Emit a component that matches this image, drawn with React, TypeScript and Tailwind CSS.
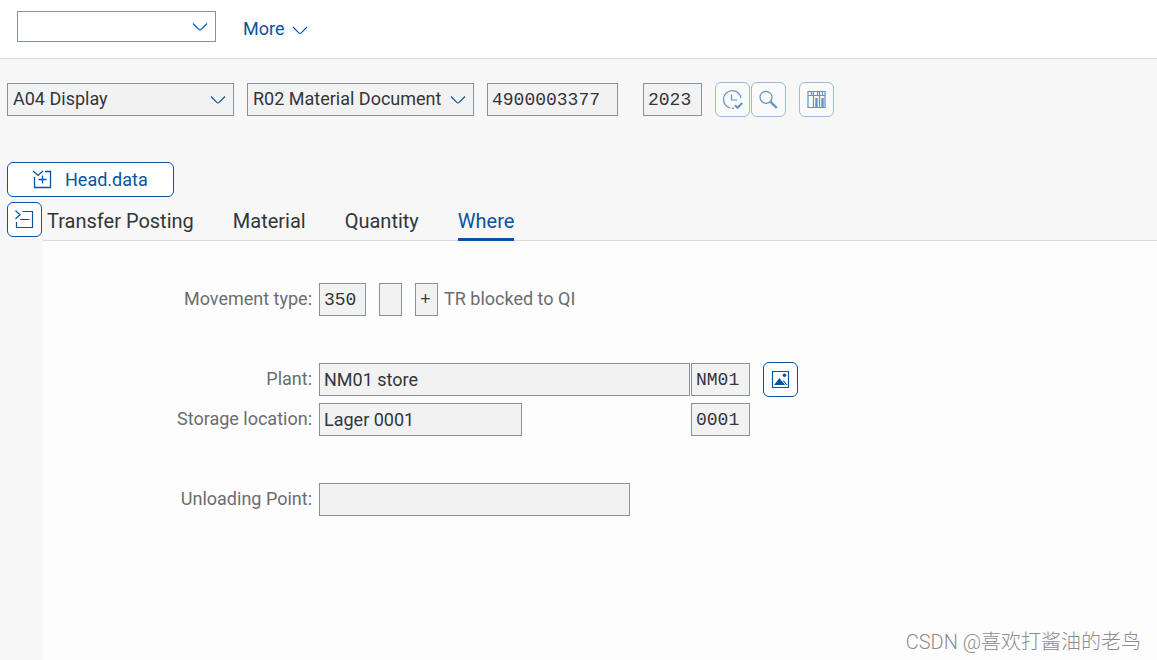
import { useState } from 'react';
import type { ReactNode } from 'react';
import clsx from 'clsx';

const TABS = ['Transfer Posting', 'Material', 'Quantity', 'Where'];

function Chevron({ className }: { className?: string }) {
  return (
    <svg
      className={className}
      width="16"
      height="9"
      viewBox="0 0 16 9"
      fill="none"
      stroke="currentColor"
      strokeWidth="1.2"
      aria-hidden="true"
    >
      <path d="M1 1 6.8 6.9Q8 8 9.2 6.9L15 1" />
    </svg>
  );
}

interface SelectFieldProps {
  label: string;
  options: string[];
  className: string;
}

function SelectField({ label, options, className }: SelectFieldProps) {
  return (
    <div className="relative">
      <select
        aria-label={label}
        className={clsx(
          'block appearance-none border border-[#89919a] pr-8 pb-px pl-[5px] text-lg leading-5 outline-none',
          className
        )}
      >
        {options.map((option) => (
          <option key={option}>{option}</option>
        ))}
      </select>
      <Chevron className="pointer-events-none absolute top-1/2 right-2 -translate-y-1/2 text-[#0854a0]" />
    </div>
  );
}

interface TextFieldProps {
  id?: string;
  label?: string;
  value: string;
  mono?: boolean;
  className: string;
}

function TextField({ id, label, value, mono, className }: TextFieldProps) {
  return (
    <input
      id={id}
      aria-label={label}
      type="text"
      readOnly
      defaultValue={value}
      className={clsx(
        'h-[33px] border border-[#89919a] bg-[#f2f2f2] px-1 text-lg text-[#32363a] outline-none',
        mono && "pt-px font-['Liberation_Mono',monospace]",
        className
      )}
    />
  );
}

interface IconButtonProps {
  label: string;
  disabled?: boolean;
  children: ReactNode;
}

function IconButton({ label, disabled, children }: IconButtonProps) {
  return (
    <button
      type="button"
      aria-label={label}
      disabled={disabled}
      className={clsx(
        'flex size-[35px] shrink-0 items-center justify-center rounded-md border',
        disabled
          ? 'border-[#9cbbd9] bg-[#fafafa] text-[#6394c5]'
          : 'border-[#0854a0] bg-white text-[#0854a0]'
      )}
    >
      <svg
        width="21"
        height="21"
        viewBox="0 0 21 21"
        fill="none"
        stroke="currentColor"
        strokeWidth="1.2"
        aria-hidden="true"
      >
        {children}
      </svg>
    </button>
  );
}

function FormRow({ label, htmlFor, children }: { label: string; htmlFor: string; children: ReactNode }) {
  return (
    <div className="flex h-10 items-center">
      <label htmlFor={htmlFor} className="mr-[7px] w-[269px] text-right text-lg text-[#6a6d70]">
        {label}
      </label>
      {children}
    </div>
  );
}

export default function App() {
  const [activeTab, setActiveTab] = useState('Where');

  return (
    <div className="relative flex min-h-screen flex-col bg-[#f7f7f7] font-['Roboto','Noto_Sans_CJK_SC',sans-serif] text-[#32363a]">
      <header className="flex items-start border-b border-[#d9d9d9] bg-white py-[11px] pl-[17px]">
        <SelectField label="Command" options={['']} className="h-[31px] w-[199px] bg-white" />
        <button type="button" className="ml-[27px] flex h-9 items-center gap-2 text-lg text-[#0854a0]">
          More
          <Chevron className="mt-0.5" />
        </button>
      </header>

      {/* Document selection */}
      <div className="flex items-center pt-[23px] pl-[7px]">
        <div className="flex gap-[13px]">
          <SelectField label="Action" options={['A04 Display']} className="h-[33px] w-[227px] bg-[#f2f2f2]" />
          <SelectField
            label="Reference document"
            options={['R02 Material Document']}
            className="h-[33px] w-[227px] bg-[#f2f2f2]"
          />
          <TextField label="Document number" value="4900003377" mono className="w-[131px]" />
        </div>
        <TextField label="Document year" value="2023" mono className="mr-[13px] ml-[25px] w-[59px]" />
        <div className="mr-[13px] flex gap-px">
          <IconButton label="Execute" disabled>
            <path d="M8.3 19A8.8 8.8 0 1 1 19 9.2" />
            <path d="M9.5 5.5v5.5h5.8M10 19.4h2" />
            <path d="m13 16.3 2.6 2.5 4.6-4.8" strokeWidth="2" />
          </IconButton>
          <IconButton label="Find" disabled>
            <circle cx="8" cy="8.3" r="6" />
            <path d="m12.3 12.7 6.5 6.3" strokeWidth="2.4" />
          </IconButton>
        </div>
        <IconButton label="Hold data" disabled>
          <path d="M2 2.5h17v16H2zM7.5 2.5v16M13.5 2.5v16" />
          <path d="M2 6.5h17M5.5 2.5v4M11.5 2.5v4M16.5 2.5v4" />
          <path d="M10.5 9v9M16.5 9v9" strokeWidth="2.4" />
        </IconButton>
      </div>

      <div className="pt-[45px] pl-[7px]">
        <button
          type="button"
          className="flex h-[35px] w-[167px] items-center gap-3 rounded-md border border-[#0854a0] bg-white pl-6 text-lg text-[#0854a0]"
        >
          <svg width="21" height="21" viewBox="0 0 21 21" fill="none" stroke="currentColor" strokeWidth="1.3" aria-hidden="true">
            <path d="M2.5 8v10.5h16v-16H13M10.5 6.5v8M6.5 10.5h8" />
            <path d="m1 2 5 4.5L11 2" />
          </svg>
          Head.data
        </button>
      </div>

      <div className="flex pt-[5px]">
        <div className="w-[43px] pl-[7px]">
          <IconButton label="Close detail data">
            <path d="M2.5 13v5.5h16v-16H8.5M6 10.5h9.5" />
            <path d="M1.5 1.5 6 5.8 1.5 10" />
          </IconButton>
        </div>
        <nav role="tablist" className="flex h-[39px] flex-1 items-stretch gap-[39px] border-b border-[#d9d9d9] pl-1">
          {TABS.map((tab) => (
            <button
              key={tab}
              type="button"
              role="tab"
              aria-selected={tab === activeTab}
              onClick={() => setActiveTab(tab)}
              className={clsx(
                '-mb-px border-b-[3px] pt-0.5 text-xl',
                tab === activeTab ? 'border-[#0854a0] text-[#0854a0]' : 'border-transparent'
              )}
            >
              {tab}
            </button>
          ))}
        </nav>
      </div>

      {/* Item detail */}
      <main className="ml-[43px] flex flex-1 flex-col gap-10 bg-[#fdfdfd] pt-[38px]">
        <FormRow label="Movement type:" htmlFor="movement-type">
          <div className="flex items-center gap-[13px]">
            <TextField id="movement-type" value="350" mono className="w-[47px]" />
            <TextField label="Special stock" value="" mono className="w-[23px]" />
            <TextField label="Stock change" value="+" mono className="w-[23px]" />
          </div>
          <span className="ml-[6px] text-lg text-[#6a6d70]">TR blocked to QI</span>
        </FormRow>

        <div>
          <FormRow label="Plant:" htmlFor="plant">
            <TextField id="plant" value="NM01 store" className="w-[371px]" />
            <TextField label="Plant code" value="NM01" mono className="mr-[13px] ml-px w-[59px]" />
            <IconButton label="Stock overview">
              <path d="M2.5 2.5h16v16h-16z" />
              <path d="m4 16 5.5-7 2.8 3.6 1.2-1.4 4 4.8z" fill="currentColor" stroke="none" />
              <path d="m10.5 9.5 5.5 7" stroke="white" strokeWidth="1" />
              <circle cx="14.5" cy="6.2" r="1.8" fill="currentColor" stroke="none" />
            </IconButton>
          </FormRow>
          <FormRow label="Storage location:" htmlFor="storage-location">
            <div className="w-[372px]">
              <TextField id="storage-location" value="Lager 0001" className="w-[203px]" />
            </div>
            <TextField label="Storage location code" value="0001" mono className="w-[59px]" />
          </FormRow>
        </div>

        <FormRow label="Unloading Point:" htmlFor="unloading-point">
          <TextField id="unloading-point" value="" className="w-[311px]" />
        </FormRow>
      </main>

      <p className="absolute right-4 bottom-1 text-xl font-light text-[#8c8c8c]">
        CSDN @喜欢打酱油的老鸟
      </p>
    </div>
  );
}
